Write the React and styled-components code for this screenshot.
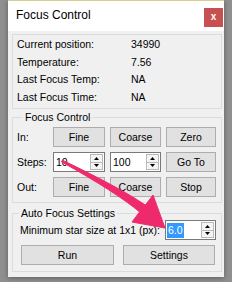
import React from 'react'
import styled, { createGlobalStyle } from 'styled-components'

const GlobalStyle = createGlobalStyle`
  html, body { margin: 0; padding: 0; }
  body {
    background: #8f8f8f;
    font-family: 'Liberation Sans', Arial, sans-serif;
    font-size: 10.5px;
    color: #000;
  }
`

const Desktop = styled.div`
  position: relative;
  width: 232px;
  height: 282px;
  box-sizing: border-box;
  padding-left: 8px;
  overflow: hidden;
  background: #8f8f8f;
`

const Window = styled.div`
  width: 216px;
  height: 277px;
  box-sizing: border-box;
  background: #f0f0f0;
  display: flex;
  flex-direction: column;
  box-shadow: 0 1px 5px rgba(0,0,0,.35);
`

const TitleBar = styled.div`
  height: 30px;
  border-top: 1px solid #d6cf8f;
  background: #fff;
  display: flex;
  justify-content: space-between;
  align-items: flex-start;
  padding-left: 8px;
`

const Title = styled.div`
  font-size: 12px;
  line-height: 28px;
`

const CloseButton = styled.div`
  width: 19px;
  height: 19px;
  margin: 7px 1px 0 0;
  background: #c75050;
  color: #fff;
  font-weight: bold;
  font-size: 10px;
  display: flex;
  align-items: center;
  justify-content: center;
  padding-bottom: 2px;
  box-sizing: border-box;
`

const Body = styled.div`
  padding: 3px 2px 5px 4px;
  display: flex;
  flex-direction: column;
`

const InfoPanel = styled.div`
  border: 1px solid #dcdcdc;
  padding: 1px 4px 2px 4px;
`

const InfoRow = styled.div`
  display: grid;
  grid-template-columns: 114px 1fr;
  height: 17.5px;
  line-height: 17.5px;
`

const GroupBox = styled.fieldset`
  margin: ${p => p.$top}px 0 0 0;
  border: 1px solid #dcdcdc;
  padding: ${p => p.$pad};
  min-width: 0;
  display: flex;
  flex-direction: column;
  gap: 5px;
`

const Legend = styled.legend`
  margin-left: 6px;
  padding: 0 2px;
  line-height: 12px;
  font-size: 10.5px;
`

const ControlRow = styled.div`
  display: grid;
  grid-template-columns: 31px 52px 51px 50px;
  column-gap: 5px;
  height: 20px;
  align-items: center;
`

const Button = styled.div`
  height: 20px;
  box-sizing: border-box;
  background: #e1e1e1;
  border: 1px solid #adadad;
  display: flex;
  align-items: center;
  justify-content: center;
`

const SpinBox = styled.div`
  height: 20px;
  box-sizing: border-box;
  width: ${p => p.$w || 'auto'};
  background: #fff;
  border: 1px solid #7a7a7a;
  display: flex;
`

const SpinText = styled.div`
  flex: 1;
  display: flex;
  align-items: center;
  padding-left: ${p => p.$pl}px;
`

const Selected = styled.span`
  background: #3399ff;
  color: #fff;
  line-height: 15px;
  padding: 0 1px;
`

const SpinButtons = styled.div`
  width: 13px;
  margin: 1px;
  display: flex;
  flex-direction: column;
`

const SpinHalf = styled.div`
  flex: 1;
  border: 1px solid #b9b9b9;
  margin-top: ${p => (p.$down ? '-1px' : '0')};
  background: #f4f4f4;
  display: flex;
  align-items: center;
  justify-content: center;
`

const StarRow = styled.div`
  display: flex;
  justify-content: space-between;
  align-items: center;
  height: 20px;
  padding: 0 5px 0 7px;
`

const ActionRow = styled.div`
  display: grid;
  grid-template-columns: 93px 92px;
  column-gap: 9px;
  padding-left: 8px;
`

const ArrowLayer = styled.svg`
  position: absolute;
  left: 0;
  top: 0;
  pointer-events: none;
`

const Spin = ({ children, w, pl = 2 }) => (
  <SpinBox $w={w}>
    <SpinText $pl={pl}>{children}</SpinText>
    <SpinButtons>
      <SpinHalf>
        <svg width="5" height="3"><path d="M0 3 L2.5 0 L5 3 Z" fill="#000" /></svg>
      </SpinHalf>
      <SpinHalf $down>
        <svg width="5" height="3"><path d="M0 0 L2.5 3 L5 0 Z" fill="#000" /></svg>
      </SpinHalf>
    </SpinButtons>
  </SpinBox>
)

const info = [
  ['Current position:', '34990'],
  ['Temperature:', '7.56'],
  ['Last Focus Temp:', 'NA'],
  ['Last Focus Time:', 'NA'],
]

export default function App() {
  return (
    <>
      <GlobalStyle />
      <Desktop>
        <Window>
          <TitleBar>
            <Title>Focus Control</Title>
            <CloseButton>x</CloseButton>
          </TitleBar>
          <Body>
            <InfoPanel>
              {info.map(([k, v]) => (
                <InfoRow key={k}>
                  <span>{k}</span>
                  <span>{v}</span>
                </InfoRow>
              ))}
            </InfoPanel>

            <GroupBox $top={2} $pad="4px 5px 5px 4px">
              <Legend>Focus Control</Legend>
              <ControlRow>
                <span>In:</span>
                <Button>Fine</Button>
                <Button>Coarse</Button>
                <Button>Zero</Button>
              </ControlRow>
              <ControlRow>
                <span>Steps:</span>
                <Spin>10</Spin>
                <Spin>100</Spin>
                <Button>Go To</Button>
              </ControlRow>
              <ControlRow>
                <span>Out:</span>
                <Button>Fine</Button>
                <Button>Coarse</Button>
                <Button>Stop</Button>
              </ControlRow>
            </GroupBox>

            <GroupBox $top={4} $pad="1px 0 6px 0">
              <Legend>Auto Focus Settings</Legend>
              <StarRow>
                <span>Minimum star size at 1x1 (px):</span>
                <Spin w="51px" pl={1}><Selected>6.0</Selected></Spin>
              </StarRow>
              <ActionRow>
                <Button>Run</Button>
                <Button>Settings</Button>
              </ActionRow>
            </GroupBox>
          </Body>
        </Window>

        {/* annotation arrow drawn over the dialog */}
        <ArrowLayer width="232" height="282" viewBox="0 0 232 282">
          <path
            d="M62.5,160.2 Q119.8,187.6 145.4,205.1 L153,195 L165,228 L132,222 L139.6,211.9 Q116.2,192.4 61.5,161.8 Z"
            fill="#ee2a6c"
            stroke="#ee2a6c"
            strokeWidth="1"
            strokeLinejoin="round"
          />
        </ArrowLayer>
      </Desktop>
    </>
  )
}
